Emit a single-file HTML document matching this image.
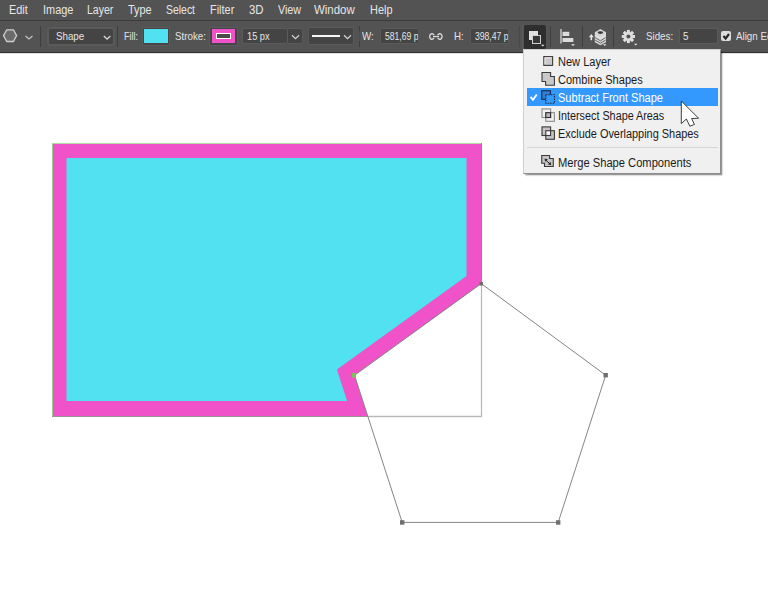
<!DOCTYPE html>
<html><head><meta charset="utf-8">
<style>
html,body{margin:0;padding:0;}
body{width:768px;height:602px;overflow:hidden;position:relative;background:#fff;font-family:"Liberation Sans",sans-serif;}
.abs{position:absolute;}
#mb{left:0;top:0;width:768px;height:20px;background:#535353;}
#div1{left:0;top:20px;width:768px;height:1px;background:#3b3b3b;}
#tb{left:0;top:21px;width:768px;height:31px;background:#535353;}
#div2{left:0;top:52px;width:768px;height:1px;background:#2f2f2f;}
.mi{position:absolute;top:2.5px;font-size:12px;color:#e6e6e6;white-space:nowrap;line-height:14px;transform:scaleX(0.91);transform-origin:0 0;}
.tt{position:absolute;font-size:10.5px;color:#e4e4e4;white-space:nowrap;line-height:13px;transform:scaleX(0.93);transform-origin:0 0;}
.box{position:absolute;background:#444444;border:1px solid #5a5a5a;box-sizing:border-box;border-radius:2px;}
.sep{position:absolute;width:1px;background:#3e3e3e;}
#menu{left:523px;top:49px;width:198px;height:125px;background:#f0f0f0;border:1px solid #cfcfcf;border-right-color:#8c8c8c;border-bottom-color:#8c8c8c;box-sizing:border-box;box-shadow:1.5px 1.5px 1.5px rgba(0,0,0,0.4);}
.it{position:absolute;left:558px;font-size:12px;color:#1a1a1a;white-space:nowrap;line-height:14px;transform:scaleX(0.92);transform-origin:0 0;}
</style></head>
<body>
<div id="mb" class="abs"></div>
<div id="div1" class="abs"></div>
<div id="tb" class="abs"></div>
<div id="div2" class="abs"></div>
<div class="abs" style="left:0;top:53px;width:768px;height:1px;background:#e2e2e2"></div>

<span class="mi" style="left:9px">Edit</span>
<span class="mi" style="left:42.5px">Image</span>
<span class="mi" style="left:86.5px;transform:scaleX(0.875)">Layer</span>
<span class="mi" style="left:127.5px">Type</span>
<span class="mi" style="left:165.5px;transform:scaleX(0.87)">Select</span>
<span class="mi" style="left:209.5px">Filter</span>
<span class="mi" style="left:248.5px;transform:scaleX(0.95)">3D</span>
<span class="mi" style="left:277.5px;transform:scaleX(0.895)">View</span>
<span class="mi" style="left:314px;transform:scaleX(0.955)">Window</span>
<span class="mi" style="left:369.5px">Help</span>

<!-- toolbar -->
<div class="sep" style="left:40px;top:26px;height:21px"></div>
<div class="box" style="left:47px;top:27px;width:68px;height:19px;border-width:2px;border-radius:3px"></div>
<span class="tt" style="left:55.5px;top:30px">Shape</span>
<div class="sep" style="left:117px;top:26px;height:21px"></div>
<span class="tt" style="left:123.5px;top:30px;transform:scaleX(0.85)">Fill:</span>
<div class="abs" style="left:142px;top:27px;width:28px;height:19px;background:#454545;border:1px solid #5b5b5b;box-sizing:border-box"></div>
<div class="abs" style="left:144px;top:29px;width:24px;height:14px;background:#52e1f0"></div>
<span class="tt" style="left:175px;top:30px">Stroke:</span>
<div class="abs" style="left:209px;top:27px;width:29px;height:19px;background:#454545;border:1px solid #5b5b5b;box-sizing:border-box"></div>
<div class="abs" style="left:212px;top:29px;width:23px;height:14px;background:#ef52c9"></div>
<div class="abs" style="left:216px;top:33px;width:15px;height:6px;background:#fff"></div>
<div class="abs" style="left:217px;top:34px;width:13px;height:4px;background:#4a4a4a"></div>
<div class="box" style="left:242px;top:28px;width:46px;height:16px"></div>
<div class="box" style="left:287px;top:28px;width:16px;height:16px"></div>
<span class="tt" style="left:246.5px;top:30px;transform:scaleX(0.88)">15 px</span>
<div class="box" style="left:308px;top:27px;width:46px;height:18px"></div>
<div class="abs" style="left:312px;top:35px;width:28px;height:2px;background:#f4f4f4"></div>
<div class="sep" style="left:359px;top:26px;height:21px;background:linear-gradient(#3c3c3c 0,#3c3c3c 18%,#4e4e4e 30%,#505050 70%,#3c3c3c 78%,#3c3c3c 100%)"></div>
<span class="tt" style="left:362px;top:30px">W:</span>
<div class="box" style="left:380px;top:28px;width:39px;height:16px;overflow:hidden"><span class="tt" style="left:3.5px;top:1px;transform:scaleX(0.82)">581,69 px</span></div>
<span class="tt" style="left:454px;top:30px">H:</span>
<div class="box" style="left:470px;top:28px;width:39px;height:16px;overflow:hidden"><span class="tt" style="left:4px;top:1px;transform:scaleX(0.82)">398,47 px</span></div>
<div class="sep" style="left:519px;top:26px;height:21px;background:repeating-linear-gradient(#454545 0 1px,#4c4c4c 1px 2px)"></div>
<div class="sep" style="left:522px;top:25px;height:24px;background:#5c5c5c"></div>
<div class="abs" style="left:524px;top:25px;width:22px;height:24px;background:#2e2e2e;border-radius:2px"></div>
<div class="sep" style="left:550px;top:26px;height:21px"></div>
<div class="sep" style="left:582px;top:26px;height:21px"></div>
<div class="sep" style="left:613px;top:26px;height:21px"></div>
<span class="tt" style="left:646px;top:30px">Sides:</span>
<div class="box" style="left:679px;top:27.5px;width:39px;height:16.5px"><span class="tt" style="left:3px;top:1.5px">5</span></div>
<div class="abs" style="left:721px;top:31px;width:10px;height:10px;background:#dcdcdc;border-radius:2px"></div>
<span class="tt" style="left:736px;top:30px">Align Edges</span>

<svg class="abs" style="left:0;top:0" width="768" height="602">
  <!-- hexagon tool icon -->
  <polygon points="3.5,35.6 6.8,29.8 13.4,29.8 16.6,35.6 13.4,41.5 6.8,41.5" fill="#6b6b6b" stroke="#cfcfcf" stroke-width="1.3"/>
  <polyline points="25.5,36 29,39 32.5,36" fill="none" stroke="#c4c4c4" stroke-width="1.2"/>
  <!-- shape dropdown chevron -->
  <polyline points="103.8,36 107.1,39 110.4,36" fill="none" stroke="#d4d4d4" stroke-width="1.3"/>
  <polyline points="292,35.3 295.5,38.6 299,35.3" fill="none" stroke="#d4d4d4" stroke-width="1.2"/>
  <polyline points="344,35.3 347.5,38.6 351,35.3" fill="none" stroke="#d4d4d4" stroke-width="1.2"/>
  <!-- link icon -->
  <path d="M434,35.2 A2.3,2.8 0 1 0 434,37.8" fill="none" stroke="#d4d4d4" stroke-width="1.4"/>
  <path d="M437.7,35.2 A2.3,2.8 0 1 1 437.7,37.8" fill="none" stroke="#d4d4d4" stroke-width="1.4"/>
  <line x1="433" y1="36.5" x2="439" y2="36.5" stroke="#d8d8d8" stroke-width="1.3"/>
  <!-- path operations icon -->
  <rect x="529" y="31" width="9" height="9" fill="#e2e2e2"/>
  <rect x="532.5" y="35.5" width="8" height="8" fill="#383838" stroke="#cfcfcf" stroke-width="1"/>
  <polygon points="541,44.8 544.5,44.8 542.75,46.5" fill="#e8e8e8"/>
  <!-- align icon -->
  <rect x="560" y="29" width="2" height="14.5" fill="#a8a8a8"/>
  <rect x="562.5" y="31.8" width="6.8" height="4.2" fill="#dcdcdc"/>
  <rect x="562.5" y="38" width="10.8" height="4" fill="#dcdcdc"/>
  <polygon points="571,44.3 575,44.3 573,46" fill="#e8e8e8"/>
  <!-- arrange icon -->
  <polygon points="588.9,37.2 591.35,34 593.8,37.2 592.15,37.2 592.15,40.2 590.55,40.2 590.55,37.2" fill="#e6e6e6"/>
  <polygon points="600.4,29 606,32.3 606,42.3 600.4,45.3 594.8,42.3 594.8,32.3" fill="#d6d6d6"/>
  <ellipse cx="600.4" cy="32.6" rx="2.7" ry="1.4" fill="#3a3a3a"/>
  <polyline points="595.2,35.2 600.4,38.6 605.6,35.2" fill="none" stroke="#e8e8e8" stroke-width="1"/>
  <polyline points="595.2,37.6 600.4,40.8 605.6,37.6" fill="none" stroke="#5a5a5a" stroke-width="0.9"/>
  <polyline points="595.2,40.2 600.4,43.2 605.6,40.2" fill="none" stroke="#5a5a5a" stroke-width="0.9"/>
  <polygon points="603,44.3 606.5,44.3 604.75,46" fill="#e8e8e8"/>
  <!-- gear -->
  <g transform="translate(628.4,36.5)">
    <circle r="4.6" fill="#dedede"/>
    <g fill="#dedede">
      <rect x="-1.5" y="-6.6" width="3" height="13.2"/>
      <rect x="-1.5" y="-6.6" width="3" height="13.2" transform="rotate(45)"/>
      <rect x="-1.5" y="-6.6" width="3" height="13.2" transform="rotate(90)"/>
      <rect x="-1.5" y="-6.6" width="3" height="13.2" transform="rotate(135)"/>
    </g>
    <circle r="2" fill="#535353"/>
  </g>
  <polygon points="634,43.8 637.5,43.8 635.75,45.5" fill="#e8e8e8"/>
  <!-- checkbox mark -->
  <polyline points="723.4,36 725.6,38.5 729,34" fill="none" stroke="#262626" stroke-width="2.1"/>
</svg>

<!-- canvas shapes -->
<svg class="abs" style="left:0;top:0" width="768" height="602">
  <polygon points="52.5,143.5 481.5,143.5 481.5,283.6 354.5,375.3 367.9,416.5 52.5,416.5" fill="#ef52c9"/>
  <polygon points="66.5,158 466.5,158 466.5,275.9 336.9,369.5 347.1,401 66.5,401" fill="#52e1f0"/>
  <line x1="52" y1="143.5" x2="482" y2="143.5" stroke="#b4dca0" stroke-width="1"/>
  <line x1="52.5" y1="143" x2="52.5" y2="417" stroke="#9ccf88" stroke-width="1"/>
  <line x1="481.5" y1="143" x2="481.5" y2="284" stroke="#8a8a8a" stroke-width="1"/>
  <line x1="52" y1="416.5" x2="368" y2="416.5" stroke="#a09098" stroke-width="1"/>
  <polyline points="481.5,284 481.5,416.5 368,416.5" fill="none" stroke="#bababa" stroke-width="1.3"/>
  <polygon points="481.2,283.6 605.7,375.2 558.2,522.4 402.2,522.4 354.5,375.3" fill="none" stroke="#858585" stroke-width="1"/>
  <rect x="479.5" y="282" width="3.5" height="3.5" fill="#6e6e6e"/>
  <rect x="352" y="373" width="4" height="4.5" fill="#74c850"/>
  <rect x="603.5" y="373" width="4.4" height="4.4" fill="#707070"/>
  <rect x="556" y="520.2" width="4.4" height="4.5" fill="#707070"/>
  <rect x="400" y="520.2" width="4.4" height="4.5" fill="#707070"/>
</svg>

<div id="menu" class="abs"></div>
<div class="abs" style="left:527px;top:88px;width:191px;height:18px;background:#3399ff"></div>
<span class="it" style="top:54.5px">New Layer</span>
<span class="it" style="top:73px">Combine Shapes</span>
<span class="it" style="top:91px;color:#fff">Subtract Front Shape</span>
<span class="it" style="top:109px;transform:scaleX(0.90)">Intersect Shape Areas</span>
<span class="it" style="top:127px;transform:scaleX(0.91)">Exclude Overlapping Shapes</span>
<div class="abs" style="left:527px;top:147px;width:191px;height:1px;background:#d5d5d5"></div>
<span class="it" style="top:155.5px;transform:scaleX(0.93)">Merge Shape Components</span>

<svg class="abs" style="left:0;top:0" width="768" height="602">
  <!-- new layer -->
  <rect x="543.8" y="56.6" width="8.8" height="8.8" fill="#c9c9c9" stroke="#3a3a3a" stroke-width="1.1"/>
  <polyline points="545,64.2 545,57.8 551.4,57.8" fill="none" stroke="#f2f2f2" stroke-width="0.9"/>
  <!-- combine -->
  <polygon points="542,72.5 550.6,72.5 550.6,76.5 554.4,76.5 554.4,85.2 545.6,85.2 545.6,81.5 542,81.5" fill="#c9c9c9" stroke="#3a3a3a" stroke-width="1.1"/>
  <!-- check -->
  <polyline points="530.5,96.8 533,99.8 536.8,94.5" fill="none" stroke="#fff" stroke-width="1.8"/>
  <!-- subtract -->
  <rect x="541.8" y="90.7" width="8.6" height="8.6" fill="#2f7ed8" stroke="#1a2a44" stroke-width="1.1"/>
  <rect x="545.8" y="94.7" width="8.6" height="8.6" fill="#3399ff" stroke="#1a2a44" stroke-width="1.1" stroke-dasharray="1.5 1"/>
  <!-- intersect -->
  <rect x="542" y="108.9" width="8.6" height="8.6" fill="none" stroke="#8a8a8a" stroke-width="1.1"/>
  <rect x="545.8" y="112.7" width="8.6" height="8.6" fill="none" stroke="#8a8a8a" stroke-width="1.1"/>
  <rect x="545.8" y="112.7" width="4.8" height="4.8" fill="#b8b8b8" stroke="#2e2e2e" stroke-width="1.1"/>
  <!-- exclude -->
  <rect x="542" y="126.9" width="8.6" height="8.6" fill="#c4c4c4"/>
  <rect x="545.8" y="130.7" width="8.6" height="8.6" fill="#c4c4c4"/>
  <rect x="545.8" y="130.7" width="4.8" height="4.8" fill="#f6f6f6"/>
  <rect x="542" y="126.9" width="8.6" height="8.6" fill="none" stroke="#3a3a3a" stroke-width="1.1"/>
  <rect x="545.8" y="130.7" width="8.6" height="8.6" fill="none" stroke="#3a3a3a" stroke-width="1.1"/>
  <!-- merge -->
  <polygon points="541.7,155.5 549.6,155.5 549.6,158.5 553.3,158.5 553.3,166.5 544.5,166.5 544.5,163.3 541.7,163.3" fill="#c4c4c4" stroke="#3a3a3a" stroke-width="1.1"/>
  <line x1="545" y1="159.5" x2="550.5" y2="164.3" stroke="#222" stroke-width="1"/>
  <polygon points="544.5,158.8 547.8,159.3 545.2,161.8" fill="#222"/>
  <polygon points="551.2,165 547.9,164.5 550.6,162" fill="#222"/>
  <!-- cursor -->
  <polygon points="681.3,101 681.3,123.6 686.4,119 689.9,126.2 694.4,124.4 691.6,118.5 698.6,118.3" fill="#fff" stroke="#2a2a2a" stroke-width="0.9" stroke-linejoin="miter"/>
</svg>
</body></html>
